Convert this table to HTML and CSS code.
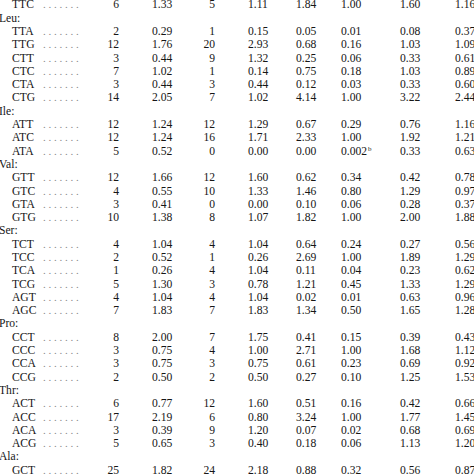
FILE: index.html
```html
<!DOCTYPE html>
<html>
<head>
<meta charset="utf-8">
<link rel="stylesheet" href="styles.css">
</head>
<body>
<div class="table">
  <div class="row"><span class="codon">TTC</span><span class="dots">. . . . . . .</span><span class="n">6</span><span class="f pad">1.33</span><span class="n">5</span><span class="f pad">1.11</span><span class="f">1.84</span><span class="f">1.00</span><span class="f">1.60</span><span class="f">1.164</span></div>
  <div class="group">Leu:</div>
  <div class="row"><span class="codon">TTA</span><span class="dots">. . . . . . .</span><span class="n">2</span><span class="f pad">0.29</span><span class="n">1</span><span class="f pad">0.15</span><span class="f">0.05</span><span class="f">0.01</span><span class="f">0.08</span><span class="f">0.379</span></div>
  <div class="row"><span class="codon">TTG</span><span class="dots">. . . . . . .</span><span class="n">12</span><span class="f pad">1.76</span><span class="n">20</span><span class="f pad">2.93</span><span class="f">0.68</span><span class="f">0.16</span><span class="f">1.03</span><span class="f">1.098</span></div>
  <div class="row"><span class="codon">CTT</span><span class="dots">. . . . . . .</span><span class="n">3</span><span class="f pad">0.44</span><span class="n">9</span><span class="f pad">1.32</span><span class="f">0.25</span><span class="f">0.06</span><span class="f">0.33</span><span class="f">0.611</span></div>
  <div class="row"><span class="codon">CTC</span><span class="dots">. . . . . . .</span><span class="n">7</span><span class="f pad">1.02</span><span class="n">1</span><span class="f pad">0.14</span><span class="f">0.75</span><span class="f">0.18</span><span class="f">1.03</span><span class="f">0.896</span></div>
  <div class="row"><span class="codon">CTA</span><span class="dots">. . . . . . .</span><span class="n">3</span><span class="f pad">0.44</span><span class="n">3</span><span class="f pad">0.44</span><span class="f">0.12</span><span class="f">0.03</span><span class="f">0.33</span><span class="f">0.600</span></div>
  <div class="row"><span class="codon">CTG</span><span class="dots">. . . . . . .</span><span class="n">14</span><span class="f pad">2.05</span><span class="n">7</span><span class="f pad">1.02</span><span class="f">4.14</span><span class="f">1.00</span><span class="f">3.22</span><span class="f">2.444</span></div>
  <div class="group">Ile:</div>
  <div class="row"><span class="codon">ATT</span><span class="dots">. . . . . . .</span><span class="n">12</span><span class="f pad">1.24</span><span class="n">12</span><span class="f pad">1.29</span><span class="f">0.67</span><span class="f">0.29</span><span class="f">0.76</span><span class="f">1.164</span></div>
  <div class="row"><span class="codon">ATC</span><span class="dots">. . . . . . .</span><span class="n">12</span><span class="f pad">1.24</span><span class="n">16</span><span class="f pad">1.71</span><span class="f">2.33</span><span class="f">1.00</span><span class="f">1.92</span><span class="f">1.21</span></div>
  <div class="row"><span class="codon">ATA</span><span class="dots">. . . . . . .</span><span class="n">5</span><span class="f pad">0.52</span><span class="n">0</span><span class="f pad">0.00</span><span class="f">0.00</span><span class="f">0.002<sup class="note">b</sup></span><span class="f">0.33</span><span class="f">0.634</span></div>
  <div class="group">Val:</div>
  <div class="row"><span class="codon">GTT</span><span class="dots">. . . . . . .</span><span class="n">12</span><span class="f pad">1.66</span><span class="n">12</span><span class="f pad">1.60</span><span class="f">0.62</span><span class="f">0.34</span><span class="f">0.42</span><span class="f">0.784</span></div>
  <div class="row"><span class="codon">GTC</span><span class="dots">. . . . . . .</span><span class="n">4</span><span class="f pad">0.55</span><span class="n">10</span><span class="f pad">1.33</span><span class="f">1.46</span><span class="f">0.80</span><span class="f">1.29</span><span class="f">0.977</span></div>
  <div class="row"><span class="codon">GTA</span><span class="dots">. . . . . . .</span><span class="n">3</span><span class="f pad">0.41</span><span class="n">0</span><span class="f pad">0.00</span><span class="f">0.10</span><span class="f">0.06</span><span class="f">0.28</span><span class="f">0.377</span></div>
  <div class="row"><span class="codon">GTG</span><span class="dots">. . . . . . .</span><span class="n">10</span><span class="f pad">1.38</span><span class="n">8</span><span class="f pad">1.07</span><span class="f">1.82</span><span class="f">1.00</span><span class="f">2.00</span><span class="f">1.888</span></div>
  <div class="group">Ser:</div>
  <div class="row"><span class="codon">TCT</span><span class="dots">. . . . . . .</span><span class="n">4</span><span class="f pad">1.04</span><span class="n">4</span><span class="f pad">1.04</span><span class="f">0.64</span><span class="f">0.24</span><span class="f">0.27</span><span class="f">0.564</span></div>
  <div class="row"><span class="codon">TCC</span><span class="dots">. . . . . . .</span><span class="n">2</span><span class="f pad">0.52</span><span class="n">1</span><span class="f pad">0.26</span><span class="f">2.69</span><span class="f">1.00</span><span class="f">1.89</span><span class="f">1.299</span></div>
  <div class="row"><span class="codon">TCA</span><span class="dots">. . . . . . .</span><span class="n">1</span><span class="f pad">0.26</span><span class="n">4</span><span class="f pad">1.04</span><span class="f">0.11</span><span class="f">0.04</span><span class="f">0.23</span><span class="f">0.622</span></div>
  <div class="row"><span class="codon">TCG</span><span class="dots">. . . . . . .</span><span class="n">5</span><span class="f pad">1.30</span><span class="n">3</span><span class="f pad">0.78</span><span class="f">1.21</span><span class="f">0.45</span><span class="f">1.33</span><span class="f">1.299</span></div>
  <div class="row"><span class="codon">AGT</span><span class="dots">. . . . . . .</span><span class="n">4</span><span class="f pad">1.04</span><span class="n">4</span><span class="f pad">1.04</span><span class="f">0.02</span><span class="f">0.01</span><span class="f">0.63</span><span class="f">0.964</span></div>
  <div class="row"><span class="codon">AGC</span><span class="dots">. . . . . . .</span><span class="n">7</span><span class="f pad">1.83</span><span class="n">7</span><span class="f pad">1.83</span><span class="f">1.34</span><span class="f">0.50</span><span class="f">1.65</span><span class="f">1.288</span></div>
  <div class="group">Pro:</div>
  <div class="row"><span class="codon">CCT</span><span class="dots">. . . . . . .</span><span class="n">8</span><span class="f pad">2.00</span><span class="n">7</span><span class="f pad">1.75</span><span class="f">0.41</span><span class="f">0.15</span><span class="f">0.39</span><span class="f">0.433</span></div>
  <div class="row"><span class="codon">CCC</span><span class="dots">. . . . . . .</span><span class="n">3</span><span class="f pad">0.75</span><span class="n">4</span><span class="f pad">1.00</span><span class="f">2.71</span><span class="f">1.00</span><span class="f">1.68</span><span class="f">1.125</span></div>
  <div class="row"><span class="codon">CCA</span><span class="dots">. . . . . . .</span><span class="n">3</span><span class="f pad">0.75</span><span class="n">3</span><span class="f pad">0.75</span><span class="f">0.61</span><span class="f">0.23</span><span class="f">0.69</span><span class="f">0.925</span></div>
  <div class="row"><span class="codon">CCG</span><span class="dots">. . . . . . .</span><span class="n">2</span><span class="f pad">0.50</span><span class="n">2</span><span class="f pad">0.50</span><span class="f">0.27</span><span class="f">0.10</span><span class="f">1.25</span><span class="f">1.533</span></div>
  <div class="group">Thr:</div>
  <div class="row"><span class="codon">ACT</span><span class="dots">. . . . . . .</span><span class="n">6</span><span class="f pad">0.77</span><span class="n">12</span><span class="f pad">1.60</span><span class="f">0.51</span><span class="f">0.16</span><span class="f">0.42</span><span class="f">0.664</span></div>
  <div class="row"><span class="codon">ACC</span><span class="dots">. . . . . . .</span><span class="n">17</span><span class="f pad">2.19</span><span class="n">6</span><span class="f pad">0.80</span><span class="f">3.24</span><span class="f">1.00</span><span class="f">1.77</span><span class="f">1.455</span></div>
  <div class="row"><span class="codon">ACA</span><span class="dots">. . . . . . .</span><span class="n">3</span><span class="f pad">0.39</span><span class="n">9</span><span class="f pad">1.20</span><span class="f">0.07</span><span class="f">0.02</span><span class="f">0.68</span><span class="f">0.699</span></div>
  <div class="row"><span class="codon">ACG</span><span class="dots">. . . . . . .</span><span class="n">5</span><span class="f pad">0.65</span><span class="n">3</span><span class="f pad">0.40</span><span class="f">0.18</span><span class="f">0.06</span><span class="f">1.13</span><span class="f">1.200</span></div>
  <div class="group">Ala:</div>
  <div class="row"><span class="codon">GCT</span><span class="dots">. . . . . . .</span><span class="n">25</span><span class="f pad">1.82</span><span class="n">24</span><span class="f pad">2.18</span><span class="f">0.88</span><span class="f">0.32</span><span class="f">0.56</span><span class="f">0.877</span></div>
</div>
</body>
</html>
```

FILE: styles.css
```css
html, body {
  margin: 0;
  padding: 0;
  background: #ffffff;
  overflow: hidden;
  width: 474px;
  height: 474px;
}

.table {
  margin-top: -1.65px;
  font-family: "Liberation Serif", "Times New Roman", serif;
  font-size: 11.6px;
  color: #161616;
  width: 530px;
}

.row {
  display: grid;
  grid-template-columns: 43px 46px 30px 66px 30px 81px 45px 59px 55px 75px;
  height: 13.31px;
  line-height: 13.31px;
  white-space: nowrap;
}

.group {
  height: 13.31px;
  line-height: 13.31px;
  margin-left: -1px;
}

.codon {
  padding-left: 12px;
}

.dots {
  color: #8a8a8a;
  font-size: 11px;
}

.n {
  text-align: right;
}

.f {
  text-align: left;
}

.pad {
  padding-left: 33px;
}

.note {
  font-size: 7px;
  line-height: 0;
  vertical-align: 4px;
  margin-left: 1px;
}
```
